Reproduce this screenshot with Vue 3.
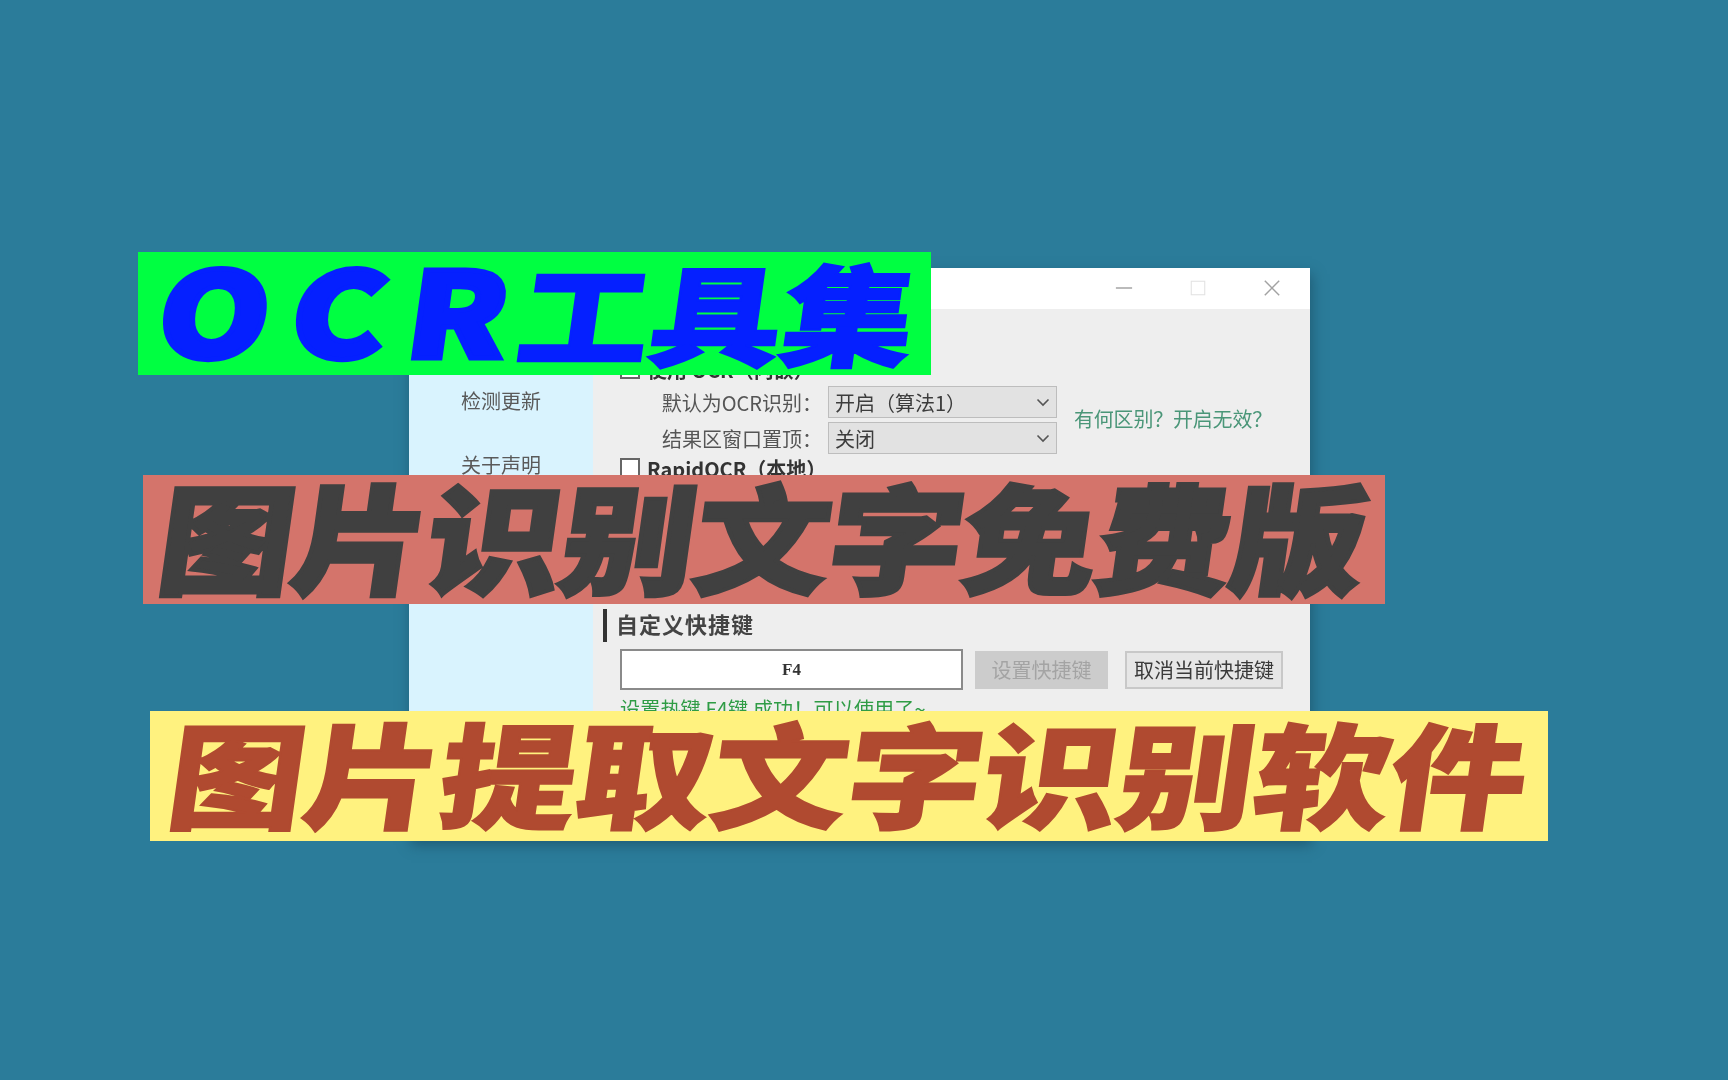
<script setup>
const selects = [
  { label: '默认为OCR识别：', value: '开启（算法1）' },
  { label: '结果区窗口置顶：', value: '关闭' },
]
const menu = ['检测更新', '关于声明']
</script>

<template>
  <div class="page">
    <section class="window">
      <header class="titlebar">
        <svg class="ctl" viewBox="0 0 20 20"><path d="M1 10h18" stroke="#9a9a9a" stroke-width="1.5" fill="none" /></svg>
        <svg class="ctl" viewBox="0 0 20 20"><rect x="2.5" y="2.5" width="15" height="15" stroke="#e2e2e2" stroke-width="1.2" fill="none" /></svg>
        <svg class="ctl" viewBox="0 0 20 20"><path d="M2 2l16 16M18 2L2 18" stroke="#a2a2a2" stroke-width="1.6" fill="none" /></svg>
      </header>
      <div class="body">
        <aside class="side">
          <div v-for="m in menu" :key="m" class="side-item">{{ m }}</div>
        </aside>
        <main class="content">
          <label class="check"><i class="box"></i>使用 OCR（内嵌）</label>
          <div class="options">
            <div class="selects">
              <div v-for="s in selects" :key="s.label" class="row">
                <span class="lab">{{ s.label }}</span>
                <div class="select">
                  <span>{{ s.value }}</span>
                  <svg width="14" height="9" viewBox="0 0 14 9"><path d="M1.5 1.5L7 7l5.5-5.5" stroke="#555" stroke-width="1.6" fill="none" /></svg>
                </div>
              </div>
            </div>
            <a class="link">有何区别？开启无效？</a>
          </div>
          <label class="check rapid"><i class="box"></i>RapidOCR（本地）</label>
          <h3 class="heading">自定义快捷键</h3>
          <div class="keys">
            <div class="input">F4</div>
            <div class="btn off">设置快捷键</div>
            <div class="btn">取消当前快捷键</div>
          </div>
          <p class="ok">设置热键 F4键 成功！可以使用了~</p>
        </main>
      </div>
    </section>

    <div class="banner green"><span class="txt"><span class="latin">OCR</span>工具集</span></div>
    <div class="banner salmon"><span class="txt">图片识别文字免费版</span></div>
    <div class="banner yellow"><span class="txt">图片提取文字识别软件</span></div>
  </div>
</template>

<style scoped>
.page {
  position: relative;
  height: 1080px;
  overflow: hidden;
  background: #2b7c9a;
  font-family: "Noto Sans CJK SC", "Liberation Sans", sans-serif;
}
.window {
  position: absolute;
  left: 409px;
  top: 268px;
  width: 901px;
  height: 571px;
  display: flex;
  flex-direction: column;
  box-shadow: 2px 6px 12px rgba(20, 60, 80, 0.5);
}
.titlebar {
  height: 41px;
  flex: none;
  background: #fff;
  display: flex;
  align-items: center;
  justify-content: flex-end;
  gap: 56px;
  padding: 0 29px 2px 0;
  box-sizing: border-box;
}
.ctl { width: 18px; height: 18px; }
.body {
  flex: 1;
  display: flex;
  min-height: 0;
  filter: blur(0.6px);
}
.side {
  width: 184px;
  flex: none;
  background: #d9f3fe;
  display: flex;
  flex-direction: column;
  align-items: center;
  padding-top: 78px;
  gap: 36px;
}
.side-item {
  font-size: 20px;
  line-height: 28px;
  color: #5a5a5a;
}
.content {
  flex: 1;
  background: #eeeeee;
  padding: 48px 0 0 27px;
  color: #444;
}
.check {
  display: flex;
  align-items: center;
  gap: 7px;
  height: 24px;
  font-size: 20px;
  font-weight: 700;
  color: #333;
}
.box {
  width: 20px;
  height: 20px;
  box-sizing: border-box;
  border: 2px solid #666;
  background: #fff;
}
.options {
  display: flex;
  align-items: center;
  margin-top: 5px;
}
.selects {
  display: flex;
  flex-direction: column;
  gap: 4px;
}
.row {
  display: flex;
  align-items: center;
}
.lab {
  width: 202px;
  margin-right: 6px;
  text-align: right;
  font-size: 20px;
  color: #555;
  white-space: nowrap;
}
.select {
  width: 229px;
  height: 32px;
  box-sizing: border-box;
  padding: 0 6px;
  background: #e2e2e2;
  border: 1px solid #bdbdbd;
  display: flex;
  align-items: center;
  justify-content: space-between;
  font-size: 20px;
  color: #3c3c3c;
}
.link {
  margin: -4px 0 0 17px;
  font-size: 20px;
  letter-spacing: -0.2px;
  color: #4a9678;
  white-space: nowrap;
}
.rapid { margin-top: 2px; }
.heading {
  margin: 129px 0 0 -17px;
  height: 33px;
  border-left: 4px solid #333;
  padding-left: 9px;
  box-sizing: border-box;
  font-size: 22px;
  line-height: 29px;
  font-weight: 700;
  color: #444;
  letter-spacing: 1px;
}
.keys {
  display: flex;
  align-items: center;
  gap: 12px;
  margin-top: 7px;
}
.input {
  width: 343px;
  height: 41px;
  box-sizing: border-box;
  border: 2px solid #8a8a8a;
  background: #fff;
  display: flex;
  align-items: center;
  justify-content: center;
  font-family: "Liberation Serif", serif;
  font-weight: 700;
  font-size: 17px;
  color: #333;
}
.btn {
  height: 38px;
  box-sizing: border-box;
  display: flex;
  align-items: center;
  justify-content: center;
  width: 158px;
  border: 2px solid #c8c8c8;
  background: #e6e6e6;
  font-size: 20px;
  color: #3a3a3a;
  white-space: nowrap;
}
.btn.off {
  width: 133px;
  margin-right: 5px;
  border-color: #cccccc;
  background: #cccccc;
  color: #a4a4a4;
}
.ok {
  margin: 5px 0 0;
  font-size: 20px;
  line-height: 28px;
  letter-spacing: 0.2px;
  color: #2f9c45;
}
.banner {
  position: absolute;
  display: flex;
  align-items: center;
  justify-content: center;
  padding-bottom: 11px;
  box-sizing: border-box;
  font-weight: 900;
  white-space: nowrap;
}
.txt {
  display: block;
  transform: translateX(var(--tx, 0)) skewX(-8deg) scaleX(var(--sx));
}
.green {
  left: 138px;
  top: 252px;
  width: 793px;
  height: 123px;
  background: #00ff41;
  color: #0520ff;
  font-size: 110px;
  line-height: 110px;
  --sx: 1.2;
  --tx: 3px;
}
.latin {
  font-size: 118px;
  letter-spacing: 18px;
  margin-right: -9px;
  -webkit-text-stroke: 5px #0520ff;
}
.green .txt { -webkit-text-stroke: 2px #0520ff; }
.salmon {
  left: 143px;
  top: 475px;
  width: 1242px;
  height: 129px;
  background: #d4746b;
  color: #404040;
  font-size: 118px;
  line-height: 118px;
  --sx: 1.135;
}
.salmon .txt { -webkit-text-stroke: 4px #404040; }
.yellow {
  left: 150px;
  top: 711px;
  width: 1398px;
  height: 130px;
  background: #fff27f;
  color: #b04a30;
  font-size: 114px;
  line-height: 114px;
  --sx: 1.19;
}
.yellow .txt { -webkit-text-stroke: 2px #b04a30; }
</style>
